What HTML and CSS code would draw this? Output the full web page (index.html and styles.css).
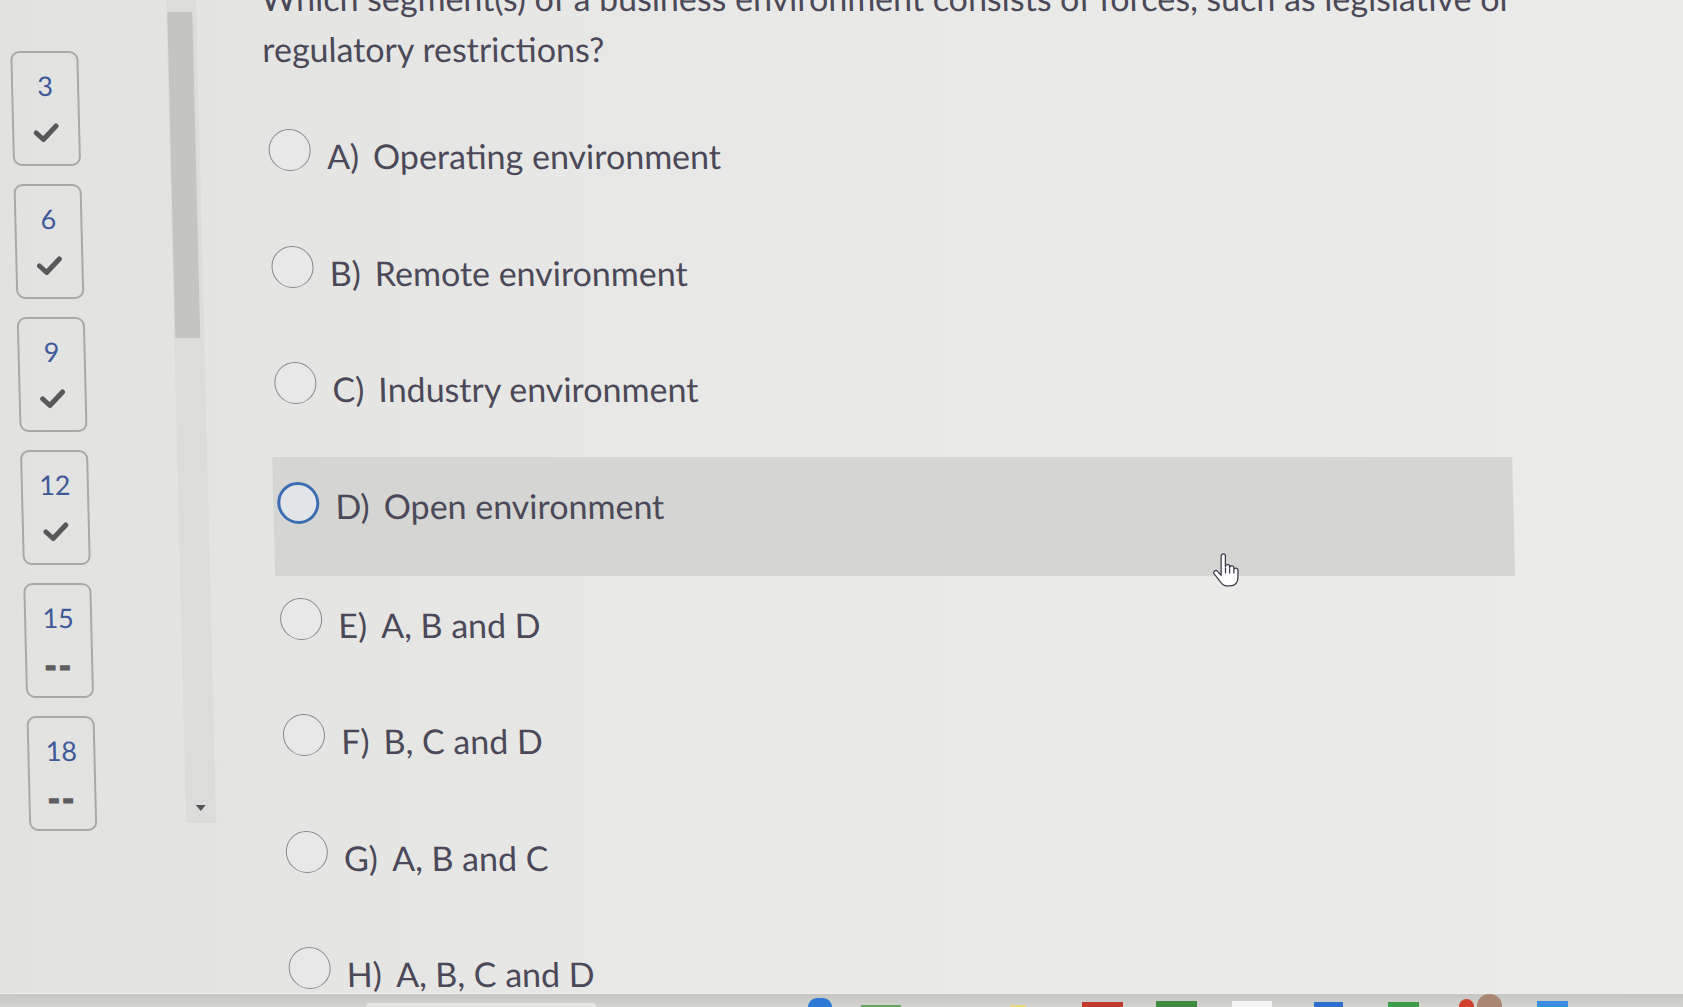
FILE: index.html
```html
<!DOCTYPE html>
<html lang="en">
<head>
<meta charset="utf-8">
<title>Quiz question</title>
<link rel="stylesheet" href="styles.css">
</head>
<body>
<div class="screen">
  <nav class="nav">
    <div class="nav-ghost">
      <div class="ghost-box"></div>
      <div class="ghost-box"></div>
      <div class="ghost-box"></div>
      <div class="ghost-box"></div>
      <div class="ghost-box"></div>
      <div class="ghost-box"></div>
    </div>
    <div class="nav-list">
      <a class="q-box"><span class="q-num">3</span><svg class="q-check" viewBox="0 0 26 20"><polyline points="3,10 10,16.5 23,3"/></svg></a>
      <a class="q-box"><span class="q-num">6</span><svg class="q-check" viewBox="0 0 26 20"><polyline points="3,10 10,16.5 23,3"/></svg></a>
      <a class="q-box"><span class="q-num">9</span><svg class="q-check" viewBox="0 0 26 20"><polyline points="3,10 10,16.5 23,3"/></svg></a>
      <a class="q-box"><span class="q-num">12</span><svg class="q-check" viewBox="0 0 26 20"><polyline points="3,10 10,16.5 23,3"/></svg></a>
      <a class="q-box"><span class="q-num">15</span><span class="q-dash">--</span></a>
      <a class="q-box"><span class="q-num">18</span><span class="q-dash">--</span></a>
    </div>
  </nav>
  <div class="scroll">
    <div class="scroll-thumb"></div>
    <div class="scroll-arrow"></div>
  </div>
  <main class="content">
    <p class="question">Which segment(s) of a business environment consists of forces, such as legislative or regulatory restrictions?</p>
    <ul class="options">
      <li class="option"><span class="radio"></span><span class="opt-label">A)</span><span class="opt-text">Operating environment</span></li>
      <li class="option"><span class="radio"></span><span class="opt-label">B)</span><span class="opt-text">Remote environment</span></li>
      <li class="option"><span class="radio"></span><span class="opt-label">C)</span><span class="opt-text">Industry environment</span></li>
      <li class="option option-hover"><span class="radio radio-focus"></span><span class="opt-label">D)</span><span class="opt-text">Open environment</span></li>
      <li class="option"><span class="radio"></span><span class="opt-label">E)</span><span class="opt-text">A, B and D</span></li>
      <li class="option"><span class="radio"></span><span class="opt-label">F)</span><span class="opt-text">B, C and D</span></li>
      <li class="option"><span class="radio"></span><span class="opt-label">G)</span><span class="opt-text">A, B and C</span></li>
      <li class="option"><span class="radio"></span><span class="opt-label">H)</span><span class="opt-text">A, B, C and D</span></li>
    </ul>
  </main>
</div>
<div class="dock">
  <span class="dk dk-search"></span>
  <span class="dk dk-blue1"></span>
  <span class="dk dk-green1"></span>
  <span class="dk dk-yellow"></span>
  <span class="dk dk-red1"></span>
  <span class="dk dk-green2"></span>
  <span class="dk dk-white"></span>
  <span class="dk dk-blue2"></span>
  <span class="dk dk-green3"></span>
  <span class="dk dk-red2"></span>
  <span class="dk dk-person"></span>
  <span class="dk dk-blue3"></span>
</div>
<svg class="cursor" viewBox="0 0 28 36">
  <path d="M9.5 3 a2.2 2.2 0 0 1 4.4 0 V14 a2.2 2.2 0 0 1 4.4 0 V15.5 a2.2 2.2 0 0 1 4.4 0 V17 a2.2 2.2 0 0 1 4.2 0 V25 c0 5.5 -3 9 -8.5 9 h-3 c-3.2 0 -5.2 -1.8 -7 -4.8 L2.2 21.5 a2.2 2.2 0 0 1 3.6 -2.6 L9.5 23 Z"/>
  <line x1="14" y1="15" x2="14" y2="21"/>
  <line x1="18.3" y1="16" x2="18.3" y2="21"/>
  <line x1="22.7" y1="17.5" x2="22.7" y2="21"/>
</svg>
</body>
</html>
```

FILE: styles.css
```css
* { box-sizing: border-box; }

html, body {
  margin: 0;
  padding: 0;
}

body {
  width: 1683px;
  height: 1007px;
  overflow: hidden;
  position: relative;
  background: linear-gradient(90deg, #e2e2e0 0%, #e8e8e6 40%, #ebebe9 100%);
  font-family: Lato, "Noto Sans", sans-serif;
  color: #4b4959;
}

.screen {
  display: flex;
  align-items: flex-start;
  height: 993px;
  overflow: hidden;
  transform: skewX(1.4deg);
  transform-origin: 0 0;
}

/* question navigator */
.nav {
  display: flex;
  gap: 12px;
  margin-left: -63px;
  flex-shrink: 0;
}

.nav-ghost,
.nav-list {
  display: flex;
  flex-direction: column;
  gap: 18px;
  padding-top: 51px;
}

.ghost-box {
  width: 60px;
  height: 115px;
  border: 2px solid #a9a9a7;
  border-radius: 9px;
}

.q-box {
  width: 68px;
  height: 115px;
  border: 2px solid #a9a9a7;
  border-radius: 9px;
  display: flex;
  flex-direction: column;
  align-items: center;
  padding-top: 19px;
}

.q-num {
  font-size: 27px;
  line-height: 28px;
  color: #40599a;
}

.q-check {
  width: 26px;
  height: 20px;
  margin-top: 23px;
  fill: none;
  stroke: #585858;
  stroke-width: 5;
  stroke-linecap: round;
  stroke-linejoin: round;
}

.q-dash {
  font-size: 30px;
  font-weight: 900;
  line-height: 24px;
  margin-top: 21px;
  color: #5e5e60;
  letter-spacing: 3px;
  -webkit-text-stroke: 2px #5e5e60;
}

/* scrollbar */
.scroll {
  margin-left: 89px;
  width: 30px;
  height: 823px;
  background: #dcdcda;
  display: flex;
  flex-direction: column;
  align-items: flex-start;
  flex-shrink: 0;
}

.scroll-thumb {
  margin: 12px 0 0 1px;
  width: 25px;
  height: 326px;
  background: #c4c4c2;
}

.scroll-arrow {
  margin-top: auto;
  margin-bottom: 12px;
  align-self: center;
  width: 0;
  height: 0;
  border-left: 5px solid transparent;
  border-right: 5px solid transparent;
  border-top: 6px solid #555557;
}

/* content */
.content {
  margin-left: 65px;
  width: 1330px;
  flex-shrink: 0;
}

.question {
  margin: -28px 0 0;
  font-size: 34px;
  line-height: 51px;
  width: 1320px;
}

.options {
  list-style: none;
  margin: 33px 0 0;
  padding: 0;
  width: 1240px;
}

.option {
  display: flex;
  align-items: flex-start;
  height: 116.5px;
  padding: 22px 0 0 4px;
}

.option-hover {
  height: 119px;
  background: #d5d5d3;
}

.option:last-child {
  height: 70px;
}

.radio {
  width: 42px;
  height: 42px;
  border-radius: 50%;
  border: 1.6px solid #88888a;
  background: #e8e8e8;
  flex-shrink: 0;
}

.radio-focus {
  border: 3px solid #3b6db3;
  background: #e2e5e8;
  margin-top: 3px;
}

.opt-label,
.opt-text {
  font-size: 34px;
  line-height: 40.8px;
  margin-top: 7.4px;
  white-space: nowrap;
}

.opt-label {
  margin-left: 16px;
}

.opt-text {
  margin-left: 14px;
}

/* bottom bezel / dock */
.dock {
  height: 14px;
  display: flex;
  align-items: flex-end;
  background: linear-gradient(#c6c7c3, #d2d3cf);
  border-top: 1px solid #eeeeec;
}

.dk { display: block; flex-shrink: 0; }
.dk-search { margin-left: 366px; width: 230px; height: 4px; background: #e6e6e4; border-radius: 3px 3px 0 0; }
.dk-blue1 { margin-left: 212px; width: 24px; height: 9px; background: #2d7ad6; border-radius: 12px 12px 0 0; }
.dk-green1 { margin-left: 29px; width: 40px; height: 2px; background: #63a85a; }
.dk-yellow { margin-left: 109px; width: 16px; height: 2px; background: #e8d683; }
.dk-red1 { margin-left: 56px; width: 41px; height: 5px; background: #bf3a2e; }
.dk-green2 { margin-left: 33px; width: 41px; height: 6px; background: #3f8b42; }
.dk-white { margin-left: 35px; width: 40px; height: 6px; background: #f3f3f3; }
.dk-blue2 { margin-left: 42px; width: 29px; height: 5px; background: #2f6fd0; }
.dk-green3 { margin-left: 45px; width: 31px; height: 5px; background: #3d9a48; }
.dk-red2 { margin-left: 40px; width: 15px; height: 8px; background: #d0412f; border-radius: 8px 8px 0 0; }
.dk-person { margin-left: 3px; width: 25px; height: 13px; background: #a98772; border-radius: 12px 12px 0 0; }
.dk-blue3 { margin-left: 35px; width: 31px; height: 6px; background: #3a8de0; }

/* mouse pointer overlay */
.cursor {
  position: absolute;
  left: 1212px;
  top: 553px;
  width: 27px;
  height: 35px;
  fill: #ffffff;
  stroke: #3a3a44;
  stroke-width: 1.3;
  stroke-linejoin: round;
}
```
